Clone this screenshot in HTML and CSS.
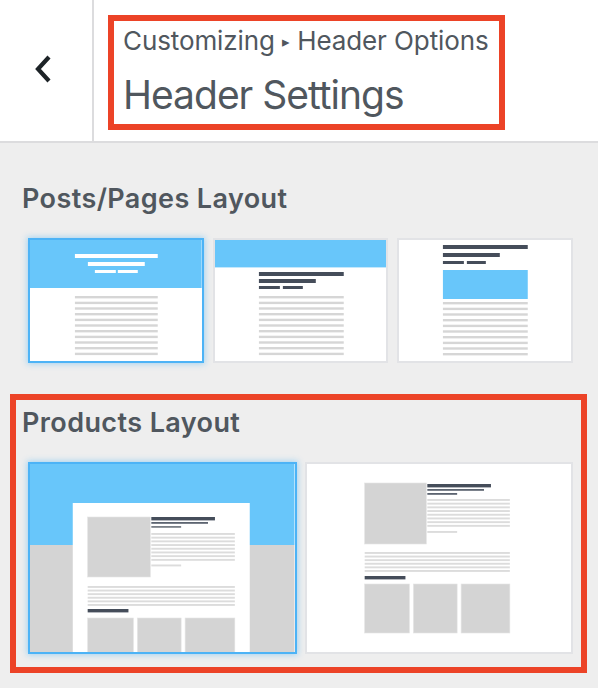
FILE: index.html
```html
<!DOCTYPE html>
<html lang="en">
<head>
<meta charset="utf-8">
<title>Header Settings</title>
<link rel="stylesheet" href="styles.css">
</head>
<body>
<header class="header">
  <div class="back">
    <svg class="chevron" width="18" height="30" viewBox="0 0 18 30"><path d="M15 3 L4 15 L15 27" fill="none" stroke="#1d2327" stroke-width="4.2"/></svg>
  </div>
  <div class="title-wrap">
    <div class="title-box">
      <div class="crumb">Customizing <span class="arrow">▸</span> Header Options</div>
      <h1 class="title">Header Settings</h1>
    </div>
  </div>
</header>
<main class="panel">
  <section class="group">
    <h2 class="group-title">Posts/Pages Layout</h2>
    <div class="thumbs three">
      <div class="thumb selected">
        <svg viewBox="0 0 172 121" preserveAspectRatio="none">
          <rect x="0" y="0" width="172" height="48" fill="#68c6fa"/>
          <rect x="45" y="14" width="83" height="4" fill="#fff"/>
          <rect x="58" y="22" width="57" height="4" fill="#fff"/>
          <rect x="65" y="30" width="21" height="3" fill="#fff"/>
          <rect x="88" y="30" width="20" height="3" fill="#fff"/>
          <g fill="#d6d6d6">
            <rect x="45" y="56" width="83" height="2.4"/><rect x="45" y="61.7" width="83" height="2.4"/><rect x="45" y="67.3" width="83" height="2.4"/><rect x="45" y="73" width="83" height="2.4"/><rect x="45" y="78.7" width="83" height="2.4"/><rect x="45" y="84.3" width="83" height="2.4"/><rect x="45" y="90" width="83" height="2.4"/><rect x="45" y="95.7" width="83" height="2.4"/><rect x="45" y="101.3" width="83" height="2.4"/><rect x="45" y="107" width="83" height="2.4"/><rect x="45" y="112.7" width="83" height="2.4"/>
          </g>
        </svg>
      </div>
      <div class="thumb">
        <svg viewBox="0 0 172 121" preserveAspectRatio="none">
          <rect x="0" y="0" width="172" height="27" fill="#68c6fa"/>
          <rect x="0" y="27" width="172" height="1" fill="#c4e8fc"/>
          <rect x="44" y="32" width="85" height="4" fill="#454d5a"/>
          <rect x="44" y="39" width="57" height="4" fill="#454d5a"/>
          <rect x="44" y="46" width="21" height="3" fill="#454d5a"/>
          <rect x="68" y="46" width="20" height="3" fill="#454d5a"/>
          <g fill="#d6d6d6">
            <rect x="44" y="56" width="85" height="2.4"/><rect x="44" y="61.7" width="85" height="2.4"/><rect x="44" y="67.3" width="85" height="2.4"/><rect x="44" y="73" width="85" height="2.4"/><rect x="44" y="78.7" width="85" height="2.4"/><rect x="44" y="84.3" width="85" height="2.4"/><rect x="44" y="90" width="85" height="2.4"/><rect x="44" y="95.7" width="85" height="2.4"/><rect x="44" y="101.3" width="85" height="2.4"/><rect x="44" y="107" width="85" height="2.4"/><rect x="44" y="112.7" width="85" height="2.4"/>
          </g>
        </svg>
      </div>
      <div class="thumb">
        <svg viewBox="0 0 172 121" preserveAspectRatio="none">
          <rect x="44" y="5" width="85" height="4" fill="#454d5a"/>
          <rect x="44" y="13" width="57" height="4" fill="#454d5a"/>
          <rect x="44" y="21" width="21" height="3" fill="#454d5a"/>
          <rect x="68" y="21" width="19" height="3" fill="#454d5a"/>
          <rect x="44" y="30" width="85" height="29" fill="#68c6fa"/>
          <g fill="#d6d6d6">
            <rect x="44" y="62" width="85" height="2.4"/><rect x="44" y="67.7" width="85" height="2.4"/><rect x="44" y="73.3" width="85" height="2.4"/><rect x="44" y="79" width="85" height="2.4"/><rect x="44" y="84.7" width="85" height="2.4"/><rect x="44" y="90.3" width="85" height="2.4"/><rect x="44" y="96" width="85" height="2.4"/><rect x="44" y="101.7" width="85" height="2.4"/><rect x="44" y="107.3" width="85" height="2.4"/><rect x="44" y="113" width="85" height="2.4"/>
          </g>
        </svg>
      </div>
    </div>
  </section>
  <section class="group marked">
    <h2 class="group-title">Products Layout</h2>
    <div class="thumbs two">
      <div class="thumb selected tall">
        <svg viewBox="0 0 266 188" preserveAspectRatio="none">
          <rect x="0" y="0" width="266" height="81" fill="#68c6fa"/>
          <rect x="0" y="81" width="266" height="107" fill="#d4d4d4"/>
          <rect x="43" y="39" width="178" height="149" fill="#fff"/>
          <rect x="58" y="53" width="63" height="60" fill="#d4d4d4" stroke="#e4e4e4" stroke-width="0.6"/>
          <rect x="122" y="53" width="64" height="3.4" fill="#454d5a"/>
          <rect x="122" y="58" width="57" height="1.8" fill="#5c6470"/>
          <rect x="122" y="62" width="30" height="1.8" fill="#7a8088"/>
          <g fill="#dcdcdc">
            <rect x="122" y="69" width="84" height="1.9"/><rect x="122" y="72.7" width="84" height="1.9"/><rect x="122" y="76.4" width="84" height="1.9"/><rect x="122" y="80.1" width="84" height="1.9"/><rect x="122" y="83.8" width="84" height="1.9"/><rect x="122" y="87.5" width="84" height="1.9"/><rect x="122" y="91.2" width="84" height="1.9"/><rect x="122" y="94.9" width="84" height="1.9"/><rect x="122" y="100.5" width="30" height="1.9"/>
            <rect x="58" y="122" width="148" height="1.9"/><rect x="58" y="125.6" width="148" height="1.9"/><rect x="58" y="129.2" width="148" height="1.9"/><rect x="58" y="132.8" width="148" height="1.9"/><rect x="58" y="136.4" width="148" height="1.9"/><rect x="58" y="140" width="148" height="1.9"/>
          </g>
          <rect x="58" y="145" width="41" height="3.4" fill="#454d5a"/>
          <g fill="#d4d4d4" stroke="#e4e4e4" stroke-width="0.6">
            <rect x="58" y="154" width="46" height="40"/><rect x="108" y="154" width="44" height="40"/><rect x="156" y="154" width="50" height="40"/>
          </g>
        </svg>
      </div>
      <div class="thumb tall">
        <svg viewBox="0 0 266 188" preserveAspectRatio="none">
          <rect x="58" y="19" width="62" height="61" fill="#d4d4d4" stroke="#e4e4e4" stroke-width="0.6"/>
          <rect x="121" y="20" width="64" height="3.4" fill="#454d5a"/>
          <rect x="121" y="25" width="57" height="1.8" fill="#5c6470"/>
          <rect x="121" y="29" width="30" height="1.8" fill="#5c6470"/>
          <g fill="#dcdcdc">
            <rect x="121" y="35" width="83" height="1.9"/><rect x="121" y="38.7" width="83" height="1.9"/><rect x="121" y="42.4" width="83" height="1.9"/><rect x="121" y="46.1" width="83" height="1.9"/><rect x="121" y="49.8" width="83" height="1.9"/><rect x="121" y="53.5" width="83" height="1.9"/><rect x="121" y="57.2" width="83" height="1.9"/><rect x="121" y="60.9" width="83" height="1.9"/><rect x="121" y="67" width="30" height="1.9"/>
            <rect x="58" y="88" width="146" height="1.9"/><rect x="58" y="91.6" width="146" height="1.9"/><rect x="58" y="95.2" width="146" height="1.9"/><rect x="58" y="98.8" width="146" height="1.9"/><rect x="58" y="102.4" width="146" height="1.9"/><rect x="58" y="106" width="146" height="1.9"/>
          </g>
          <rect x="58" y="112" width="41" height="3.4" fill="#454d5a"/>
          <g fill="#d4d4d4" stroke="#e4e4e4" stroke-width="0.6">
            <rect x="58" y="120" width="45" height="49"/><rect x="107" y="120" width="44" height="49"/><rect x="155" y="120" width="49" height="49"/>
          </g>
        </svg>
      </div>
    </div>
  </section>
</main>
</body>
</html>
```
FILE: styles.css
```css
* { box-sizing: border-box; }
html, body { margin: 0; padding: 0; }
body {
  width: 598px;
  height: 688px;
  overflow: hidden;
  background: #eeeeee;
  font-family: Inter, "Open Sans", "Liberation Sans", sans-serif;
  color: #50575e;
}
.header {
  display: flex;
  height: 143px;
  background: #fff;
  border-bottom: 2px solid #dcdcde;
}
.back {
  width: 94px;
  border-right: 2px solid #dcdcde;
  display: flex;
  align-items: center;
  justify-content: center;
}
.chevron { display: block; margin-right: 6px; margin-top: -3px; }
.title-wrap { padding: 15px 0 0 14px; }
.title-box {
  width: 397px;
  height: 115px;
  border: 6px solid #ec4327;
  padding: 4px 0 0 9px;
}
.crumb {
  font-size: 26px;
  line-height: 31px;
  letter-spacing: -0.1px;
}
.arrow { font-size: 15px; position: relative; top: -3px; }
.title {
  margin: 11px 0 0;
  font-size: 39px;
  line-height: 47px;
  font-weight: 400;
  letter-spacing: -1px;
}
.panel { padding: 27px 11px 0 10px; }
.group {
  border: 6px solid transparent;
  padding: 6px 8px 13px 12px;
}
.group + .group { margin-top: 12px; }
.group.marked { border-color: #ec4327; }
.group-title {
  margin: 0 0 22px -6px;
  font-size: 27px;
  line-height: 34px;
  font-weight: 600;
  letter-spacing: 0.4px;
}
.thumbs { display: grid; }
.thumbs.three { grid-template-columns: 1fr 1fr 1fr; gap: 9px; }
.thumbs.two { grid-template-columns: 1fr 1fr; gap: 8px; }
.thumb {
  height: 125px;
  background: #fff;
  border: 2px solid #e2e3e6;
}
.thumb.tall { height: 192px; }
.thumb.selected {
  border-color: #4cb3f6;
  box-shadow: 0 0 6px 1px rgba(76, 179, 246, 0.45);
}
.thumb svg { display: block; width: 100%; height: 100%; }
```
